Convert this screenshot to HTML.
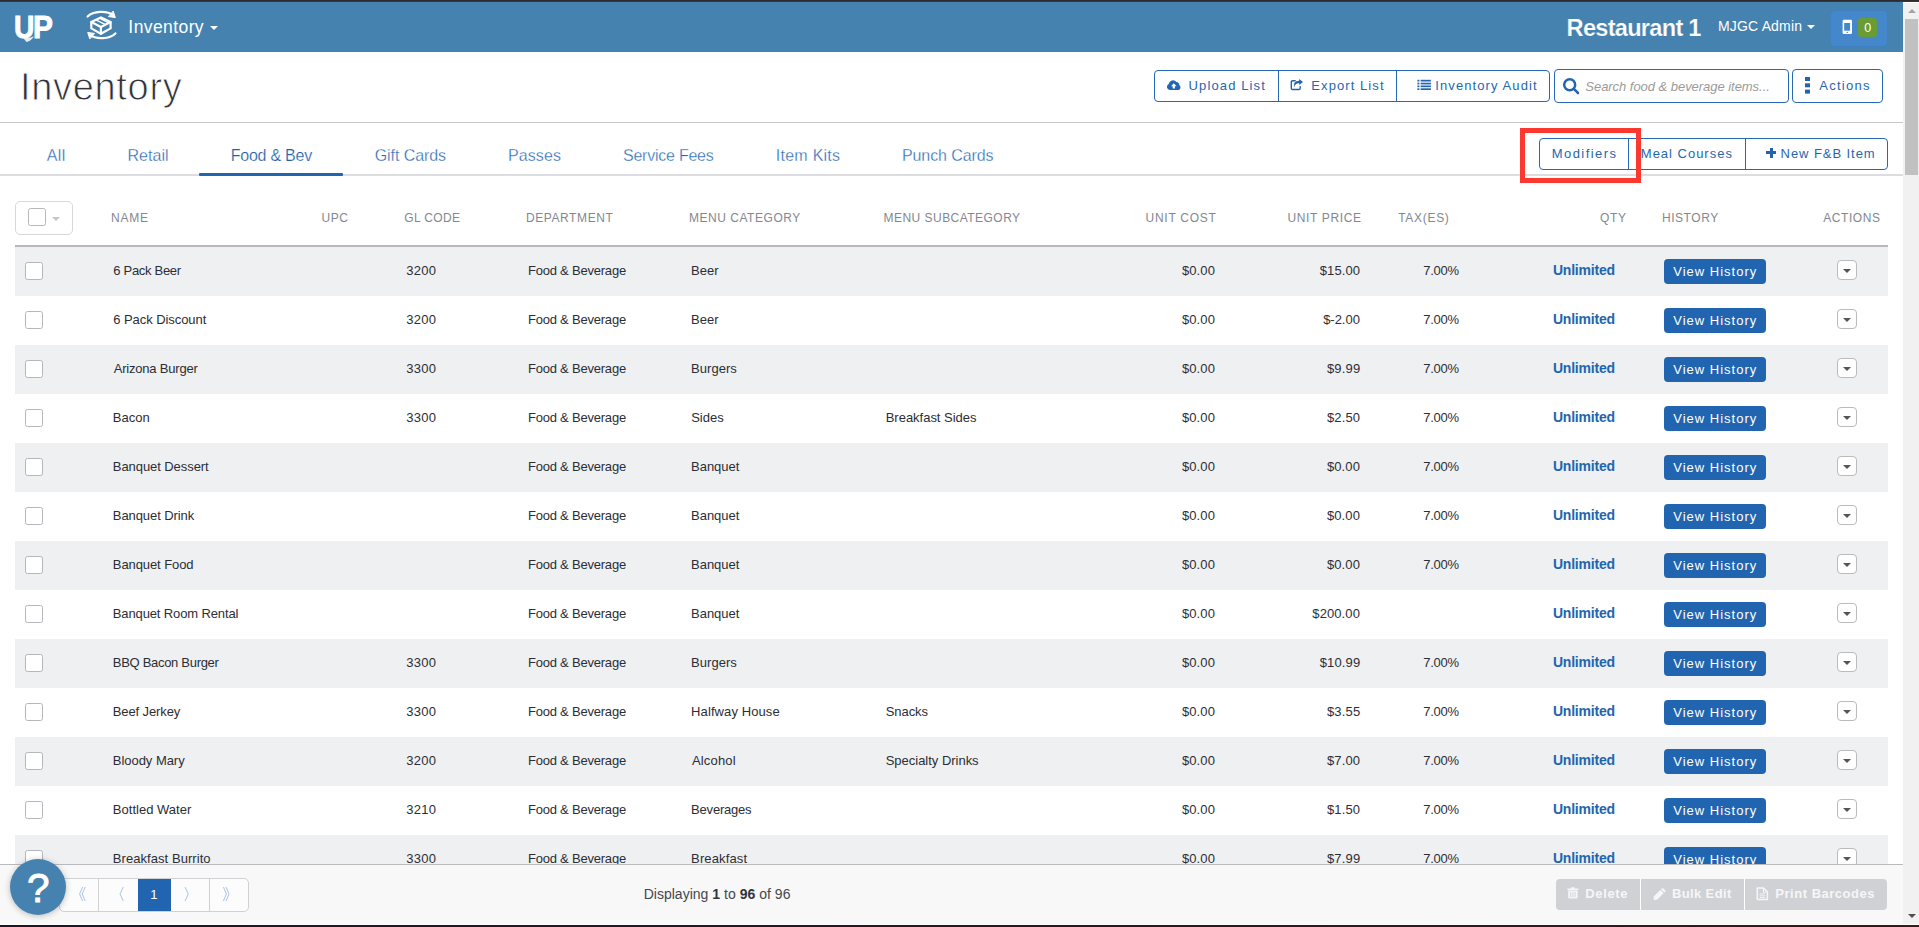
<!DOCTYPE html>
<html lang="en"><head><meta charset="utf-8"><title>Inventory</title>
<style>
html,body{margin:0;padding:0}
body{width:1919px;height:927px;overflow:hidden;position:relative;background:#fff;font-family:"Liberation Sans",sans-serif}
div,span,svg{box-sizing:border-box}
.ob{position:absolute;border:1px solid #2668b3;border-radius:4px;background:#fff}
.dv{position:absolute;width:1px;background:#2668b3}
.cb{position:absolute;width:18px;height:18px;border:1px solid #b4b6bb;border-radius:2.5px;background:#fff}
.vh{position:absolute;left:1664px;width:102px;height:25px;border-radius:4px;background:#2165b0}
.dd{position:absolute;left:1837px;width:20px;height:20px;border:1px solid #b9bbbf;border-radius:4px;background:#fff}
.dd:after{content:"";position:absolute;left:5px;top:8px;border-left:4px solid transparent;border-right:4px solid transparent;border-top:4px solid #555}
.row{position:absolute;left:15px;width:1873px;height:49px}
</style></head><body>
<div style="position:absolute;left:0px;top:0px;width:1903px;height:52px;background:#4682b0"></div>
<span style="position:absolute;left:13.70px;top:15.00px;line-height:24px;white-space:pre;color:#fff;font-family:'Liberation Sans',sans-serif;font-size:30.6px;font-weight:700;font-style:normal;letter-spacing:0px;-webkit-text-stroke:.9px #fff;transform:scaleX(.925);transform-origin:0 0;">U</span>
<span style="position:absolute;left:32.65px;top:15.00px;line-height:24px;white-space:pre;color:#fff;font-family:'Liberation Sans',sans-serif;font-size:30.6px;font-weight:700;font-style:normal;letter-spacing:0px;-webkit-text-stroke:.9px #fff;transform:scaleX(.975);transform-origin:0 0;">P</span>
<svg style="position:absolute;left:20px;top:33px" width="16" height="10" viewBox="0 0 16 10"><path d="M2 3.5 L6.5 9 Q11.5 7.8 14 3.2 Q9 5.6 4.5 4.4 Z" fill="#fff" opacity=".85"/></svg>
<svg style="position:absolute;left:80px;top:4px" width="45" height="42" viewBox="0 0 45 42" fill="none" stroke="#fff" stroke-width="2.2" stroke-linecap="round" stroke-linejoin="round">
<path d="M7.6 12.6 C13 6.9 27 6.1 33.4 11.4"/><path d="M33.3 7.4 L35.3 13.6 L28.8 12.6 Z" fill="#fff" stroke-width="1"/>
<path d="M35.4 29.4 C30 35.1 16 35.9 9.6 30.6"/><path d="M9.7 34.6 L7.7 28.4 L14.2 29.4 Z" fill="#fff" stroke-width="1"/>
<path d="M20.9 13.4 L30.6 18.1 L30.6 24.4 L20.9 29.8 L11.3 24.4 L11.3 18.1 Z"/>
<path d="M11.3 18.1 L20.9 22.9 L30.6 18.1 M20.9 22.9 L20.9 29.8"/>
<path d="M15.9 15.9 L25.5 20.6 M19.5 14.1 L28.8 18.8" stroke-width="1.5"/>
</svg>
<span style="position:absolute;left:128.37px;top:15.10px;line-height:24px;white-space:pre;color:#fff;font-family:'Liberation Sans',sans-serif;font-size:17.5px;font-weight:400;font-style:normal;letter-spacing:0.41px;">Inventory</span>
<div style="position:absolute;left:210px;top:26px;border-left:4px solid transparent;border-right:4px solid transparent;border-top:4px solid #fff"></div>
<span style="position:absolute;left:1566.59px;top:16.40px;line-height:24px;white-space:pre;color:#fff;font-family:'Liberation Sans',sans-serif;font-size:23.6px;font-weight:700;font-style:normal;letter-spacing:-0.73px;-webkit-text-stroke:.22px #4682b0;">Restaurant 1</span>
<span style="position:absolute;left:1718.05px;top:14.00px;line-height:24px;white-space:pre;color:#fff;font-family:'Liberation Sans',sans-serif;font-size:14px;font-weight:400;font-style:normal;letter-spacing:0.16px;">MJGC Admin</span>
<div style="position:absolute;left:1806.5px;top:25px;border-left:4.5px solid transparent;border-right:4.5px solid transparent;border-top:4.5px solid #fff"></div>
<div style="position:absolute;left:1830px;top:10px;width:58px;height:37px;background:#4488cb;border:1px solid #3f80c1;border-radius:5px"></div>
<svg style="position:absolute;left:1842px;top:19px" width="11" height="16" viewBox="0 0 11 16"><rect x=".6" y=".7" width="9.4" height="14.4" rx="1.3" fill="#fff"/><rect x="2.2" y="4" width="5.9" height="7.7" fill="#4488cb"/><circle cx="5.3" cy="13.4" r=".7" fill="#4488cb"/></svg>
<div style="position:absolute;left:1858px;top:18px;width:19px;height:19px;background:#6a9c35;border-radius:3.5px"></div>
<span style="position:absolute;left:1864.27px;top:15.90px;line-height:24px;white-space:pre;color:#fff;font-family:'Liberation Sans',sans-serif;font-size:12.5px;font-weight:400;font-style:normal;letter-spacing:0px;">0</span>
<div style="position:absolute;left:0px;top:0px;width:1919px;height:2px;background:linear-gradient(#2c2d31 0,#2c2d31 55%,#3d4650 100%)"></div>
<span style="position:absolute;left:20.02px;top:74.80px;line-height:24px;white-space:pre;color:#2f3238;font-family:'Liberation Sans',sans-serif;font-size:38px;font-weight:400;font-style:normal;letter-spacing:0.68px;-webkit-text-stroke:.9px #fff;">Inventory</span>
<div style="position:absolute;left:0px;top:122px;width:1903px;height:1px;background:#c6c7cb"></div>
<div class="ob" style="left:1154px;top:70px;width:396px;height:32px"></div>
<div class="dv" style="left:1278px;top:70px;height:32px"></div><div class="dv" style="left:1396px;top:70px;height:32px"></div>
<svg style="position:absolute;left:1166px;top:79px" width="16" height="12" viewBox="0 0 16 12"><path d="M3.9 11.1 A3.3 3.3 0 0 1 2.7 4.9 A4.3 4.3 0 0 1 10.4 3.1 A2.6 2.6 0 0 1 13.2 6.1 A2.7 2.7 0 0 1 12.2 11.1 Z" fill="#2165b0"/><path d="M7.8 4.3 L10.6 7.3 L8.9 7.3 L8.9 9.6 L6.7 9.6 L6.7 7.3 L5 7.3 Z" fill="#fff"/></svg>
<span style="position:absolute;left:1188.62px;top:74.00px;line-height:24px;white-space:pre;color:#2467b1;font-family:'Liberation Sans',sans-serif;font-size:13px;font-weight:400;font-style:normal;letter-spacing:1.12px;">Upload List</span>
<svg style="position:absolute;left:1290px;top:78px" width="14" height="13" viewBox="0 0 14 13" fill="none"><path d="M5.2 2.7 H2.6 Q1.3 2.7 1.3 4 V10.2 Q1.3 11.5 2.6 11.5 H8.9 Q10.2 11.5 10.2 10.2 V8.6" stroke="#2165b0" stroke-width="1.4" stroke-linecap="round"/><path d="M9.2 .9 L13 4 L9.2 7.1 V5.3 Q5.2 5 4.4 9.2 Q2.6 3.2 9.2 2.8 Z" fill="#2165b0"/></svg>
<span style="position:absolute;left:1311.32px;top:74.00px;line-height:24px;white-space:pre;color:#2467b1;font-family:'Liberation Sans',sans-serif;font-size:13px;font-weight:400;font-style:normal;letter-spacing:1.08px;">Export List</span>
<svg style="position:absolute;left:1417px;top:79px" width="15" height="12" viewBox="0 0 15 12" fill="#2165b0"><rect x=".4" y=".8" width="2" height="1.7"/><rect x="3.6" y=".8" width="10.3" height="1.7"/><rect x=".4" y="3.7" width="2" height="1.7"/><rect x="3.6" y="3.7" width="10.3" height="1.7"/><rect x=".4" y="6.5" width="2" height="1.7"/><rect x="3.6" y="6.5" width="10.3" height="1.7"/><rect x=".4" y="9.3" width="2" height="1.7"/><rect x="3.6" y="9.3" width="10.3" height="1.7"/></svg>
<span style="position:absolute;left:1435.30px;top:74.00px;line-height:24px;white-space:pre;color:#2467b1;font-family:'Liberation Sans',sans-serif;font-size:13px;font-weight:400;font-style:normal;letter-spacing:1.09px;">Inventory Audit</span>
<div class="ob" style="left:1554px;top:69px;width:235px;height:34px"></div>
<svg style="position:absolute;left:1561px;top:76px" width="20" height="20" viewBox="0 0 20 20" fill="none" stroke="#2165b0" stroke-width="2.5" stroke-linecap="round"><circle cx="8.7" cy="8.7" r="5.5"/><path d="M12.9 12.9 L17 17"/></svg>
<span style="position:absolute;left:1585.32px;top:74.60px;line-height:24px;white-space:pre;color:#9b9b9b;font-family:'Liberation Sans',sans-serif;font-size:13px;font-weight:400;font-style:italic;letter-spacing:-0.04px;">Search food &amp; beverage items...</span>
<div class="ob" style="left:1792px;top:69px;width:91px;height:34px"></div>
<div style="position:absolute;left:1805.4px;top:77.2px;width:4.6px;height:3.8px;background:#2165b0;box-shadow:0 6.3px 0 #2165b0,0 12.6px 0 #2165b0"></div>
<span style="position:absolute;left:1819.27px;top:74.00px;line-height:24px;white-space:pre;color:#2467b1;font-family:'Liberation Sans',sans-serif;font-size:13px;font-weight:400;font-style:normal;letter-spacing:1.26px;">Actions</span>
<div style="position:absolute;left:0px;top:174px;width:1903px;height:2px;background:#dcdde0"></div>
<div style="position:absolute;left:199px;top:173px;width:144px;height:3px;background:#2165b0;border-radius:1px"></div>
<span style="position:absolute;left:46.80px;top:144.20px;line-height:24px;white-space:pre;color:#2768b2;font-family:'Liberation Sans',sans-serif;font-size:16px;font-weight:400;font-style:normal;letter-spacing:0.31px;-webkit-text-stroke:.3px #fff;">All</span>
<span style="position:absolute;left:127.46px;top:144.20px;line-height:24px;white-space:pre;color:#2768b2;font-family:'Liberation Sans',sans-serif;font-size:16px;font-weight:400;font-style:normal;letter-spacing:0.06px;-webkit-text-stroke:.3px #fff;">Retail</span>
<span style="position:absolute;left:230.71px;top:144.20px;line-height:24px;white-space:pre;color:#1f5fa9;font-family:'Liberation Sans',sans-serif;font-size:16px;font-weight:400;font-style:normal;letter-spacing:-0.24px;-webkit-text-stroke:.2px #fff;">Food &amp; Bev</span>
<span style="position:absolute;left:374.75px;top:144.20px;line-height:24px;white-space:pre;color:#2768b2;font-family:'Liberation Sans',sans-serif;font-size:16px;font-weight:400;font-style:normal;letter-spacing:-0.08px;-webkit-text-stroke:.3px #fff;">Gift Cards</span>
<span style="position:absolute;left:507.96px;top:144.20px;line-height:24px;white-space:pre;color:#2768b2;font-family:'Liberation Sans',sans-serif;font-size:16px;font-weight:400;font-style:normal;letter-spacing:0.11px;-webkit-text-stroke:.3px #fff;">Passes</span>
<span style="position:absolute;left:623.01px;top:144.20px;line-height:24px;white-space:pre;color:#2768b2;font-family:'Liberation Sans',sans-serif;font-size:16px;font-weight:400;font-style:normal;letter-spacing:-0.24px;-webkit-text-stroke:.3px #fff;">Service Fees</span>
<span style="position:absolute;left:775.84px;top:144.20px;line-height:24px;white-space:pre;color:#2768b2;font-family:'Liberation Sans',sans-serif;font-size:16px;font-weight:400;font-style:normal;letter-spacing:0.25px;-webkit-text-stroke:.3px #fff;">Item Kits</span>
<span style="position:absolute;left:901.96px;top:144.20px;line-height:24px;white-space:pre;color:#2768b2;font-family:'Liberation Sans',sans-serif;font-size:16px;font-weight:400;font-style:normal;letter-spacing:-0.09px;-webkit-text-stroke:.3px #fff;">Punch Cards</span>
<div class="ob" style="left:1539px;top:138px;width:349px;height:32px"></div>
<div class="dv" style="left:1628px;top:138px;height:32px"></div><div class="dv" style="left:1745px;top:138px;height:32px"></div>
<span style="position:absolute;left:1551.82px;top:142.00px;line-height:24px;white-space:pre;color:#2467b1;font-family:'Liberation Sans',sans-serif;font-size:13px;font-weight:400;font-style:normal;letter-spacing:1.42px;">Modifiers</span>
<span style="position:absolute;left:1640.82px;top:142.00px;line-height:24px;white-space:pre;color:#2467b1;font-family:'Liberation Sans',sans-serif;font-size:13px;font-weight:400;font-style:normal;letter-spacing:0.99px;">Meal Courses</span>
<div style="position:absolute;left:1766px;top:151.4px;width:10px;height:3px;background:#2165b0"></div><div style="position:absolute;left:1769.5px;top:147.9px;width:3px;height:10px;background:#2165b0"></div>
<span style="position:absolute;left:1780.62px;top:142.00px;line-height:24px;white-space:pre;color:#2467b1;font-family:'Liberation Sans',sans-serif;font-size:13px;font-weight:400;font-style:normal;letter-spacing:0.93px;">New F&amp;B Item</span>
<div style="position:absolute;left:1520px;top:128px;width:121px;height:55px;border:5px solid #fd382e"></div>
<div style="position:absolute;left:15px;top:201px;width:58px;height:34px;border:1px solid #d6d8db;border-radius:5px;background:#fff"></div>
<div class="cb" style="left:28px;top:208px;border-color:#b6b8bc"></div>
<div style="position:absolute;left:52.3px;top:217.2px;border-left:4px solid transparent;border-right:4px solid transparent;border-top:4px solid #c6c8cb"></div>
<span style="position:absolute;left:110.88px;top:206.10px;line-height:24px;white-space:pre;color:#82888f;font-family:'Liberation Sans',sans-serif;font-size:12px;font-weight:400;font-style:normal;letter-spacing:0.84px;">NAME</span>
<span style="position:absolute;left:321.60px;top:206.10px;line-height:24px;white-space:pre;color:#82888f;font-family:'Liberation Sans',sans-serif;font-size:12px;font-weight:400;font-style:normal;letter-spacing:0.52px;">UPC</span>
<span style="position:absolute;left:404.34px;top:206.10px;line-height:24px;white-space:pre;color:#82888f;font-family:'Liberation Sans',sans-serif;font-size:12px;font-weight:400;font-style:normal;letter-spacing:0.37px;">GL CODE</span>
<span style="position:absolute;left:525.88px;top:206.10px;line-height:24px;white-space:pre;color:#82888f;font-family:'Liberation Sans',sans-serif;font-size:12px;font-weight:400;font-style:normal;letter-spacing:0.6px;">DEPARTMENT</span>
<span style="position:absolute;left:688.88px;top:206.10px;line-height:24px;white-space:pre;color:#82888f;font-family:'Liberation Sans',sans-serif;font-size:12px;font-weight:400;font-style:normal;letter-spacing:0.54px;">MENU CATEGORY</span>
<span style="position:absolute;left:883.58px;top:206.10px;line-height:24px;white-space:pre;color:#82888f;font-family:'Liberation Sans',sans-serif;font-size:12px;font-weight:400;font-style:normal;letter-spacing:0.46px;">MENU SUBCATEGORY</span>
<span style="position:absolute;left:1145.50px;top:206.10px;line-height:24px;white-space:pre;color:#82888f;font-family:'Liberation Sans',sans-serif;font-size:12px;font-weight:400;font-style:normal;letter-spacing:0.75px;">UNIT COST</span>
<span style="position:absolute;left:1287.50px;top:206.10px;line-height:24px;white-space:pre;color:#82888f;font-family:'Liberation Sans',sans-serif;font-size:12px;font-weight:400;font-style:normal;letter-spacing:0.64px;">UNIT PRICE</span>
<span style="position:absolute;left:1398.17px;top:206.10px;line-height:24px;white-space:pre;color:#82888f;font-family:'Liberation Sans',sans-serif;font-size:12px;font-weight:400;font-style:normal;letter-spacing:0.71px;">TAX(ES)</span>
<span style="position:absolute;left:1600.09px;top:206.10px;line-height:24px;white-space:pre;color:#82888f;font-family:'Liberation Sans',sans-serif;font-size:12px;font-weight:400;font-style:normal;letter-spacing:0.6px;">QTY</span>
<span style="position:absolute;left:1661.98px;top:206.10px;line-height:24px;white-space:pre;color:#82888f;font-family:'Liberation Sans',sans-serif;font-size:12px;font-weight:400;font-style:normal;letter-spacing:0.55px;">HISTORY</span>
<span style="position:absolute;left:1823.18px;top:206.10px;line-height:24px;white-space:pre;color:#82888f;font-family:'Liberation Sans',sans-serif;font-size:12px;font-weight:400;font-style:normal;letter-spacing:0.57px;">ACTIONS</span>
<div style="position:absolute;left:15px;top:245px;width:1873px;height:2px;background:#b5b8bd"></div>
<div class="row" style="top:247px;background:#eff0f2"></div>
<div class="cb" style="left:25px;top:262px"></div>
<span style="position:absolute;left:113.32px;top:259.00px;line-height:24px;white-space:pre;color:#2b2e35;font-family:'Liberation Sans',sans-serif;font-size:13px;font-weight:400;font-style:normal;letter-spacing:-0.3px;">6 Pack Beer</span>
<span style="position:absolute;left:406.26px;top:259.00px;line-height:24px;white-space:pre;color:#2b2e35;font-family:'Liberation Sans',sans-serif;font-size:13px;font-weight:400;font-style:normal;letter-spacing:0.26px;">3200</span>
<span style="position:absolute;left:527.92px;top:259.00px;line-height:24px;white-space:pre;color:#2b2e35;font-family:'Liberation Sans',sans-serif;font-size:13px;font-weight:400;font-style:normal;letter-spacing:-0.21px;">Food &amp; Beverage</span>
<span style="position:absolute;left:691.12px;top:259.00px;line-height:24px;white-space:pre;color:#2b2e35;font-family:'Liberation Sans',sans-serif;font-size:13px;font-weight:400;font-style:normal;letter-spacing:0.03px;">Beer</span>
<span style="position:absolute;left:1181.93px;top:259.00px;line-height:24px;white-space:pre;color:#2b2e35;font-family:'Liberation Sans',sans-serif;font-size:13px;font-weight:400;font-style:normal;letter-spacing:0.11px;">$0.00</span>
<span style="position:absolute;left:1319.73px;top:259.00px;line-height:24px;white-space:pre;color:#2b2e35;font-family:'Liberation Sans',sans-serif;font-size:13px;font-weight:400;font-style:normal;letter-spacing:0.1px;">$15.00</span>
<span style="position:absolute;left:1423.32px;top:259.00px;line-height:24px;white-space:pre;color:#2b2e35;font-family:'Liberation Sans',sans-serif;font-size:13px;font-weight:400;font-style:normal;letter-spacing:-0.3px;">7.00%</span>
<span style="position:absolute;left:1552.90px;top:258.00px;line-height:24px;white-space:pre;color:#2165b0;font-family:'Liberation Sans',sans-serif;font-size:14px;font-weight:700;font-style:normal;letter-spacing:-0.19px;">Unlimited</span>
<div class="vh" style="top:259px"></div>
<span style="position:absolute;left:1673.25px;top:260.00px;line-height:24px;white-space:pre;color:#fff;font-family:'Liberation Sans',sans-serif;font-size:13px;font-weight:400;font-style:normal;letter-spacing:1.0px;">View History</span>
<div class="dd" style="top:260px"></div>
<div class="cb" style="left:25px;top:311px"></div>
<span style="position:absolute;left:113.32px;top:308.00px;line-height:24px;white-space:pre;color:#2b2e35;font-family:'Liberation Sans',sans-serif;font-size:13px;font-weight:400;font-style:normal;letter-spacing:-0.07px;">6 Pack Discount</span>
<span style="position:absolute;left:406.26px;top:308.00px;line-height:24px;white-space:pre;color:#2b2e35;font-family:'Liberation Sans',sans-serif;font-size:13px;font-weight:400;font-style:normal;letter-spacing:0.26px;">3200</span>
<span style="position:absolute;left:527.92px;top:308.00px;line-height:24px;white-space:pre;color:#2b2e35;font-family:'Liberation Sans',sans-serif;font-size:13px;font-weight:400;font-style:normal;letter-spacing:-0.21px;">Food &amp; Beverage</span>
<span style="position:absolute;left:691.12px;top:308.00px;line-height:24px;white-space:pre;color:#2b2e35;font-family:'Liberation Sans',sans-serif;font-size:13px;font-weight:400;font-style:normal;letter-spacing:0.03px;">Beer</span>
<span style="position:absolute;left:1181.93px;top:308.00px;line-height:24px;white-space:pre;color:#2b2e35;font-family:'Liberation Sans',sans-serif;font-size:13px;font-weight:400;font-style:normal;letter-spacing:0.11px;">$0.00</span>
<span style="position:absolute;left:1323.13px;top:308.00px;line-height:24px;white-space:pre;color:#2b2e35;font-family:'Liberation Sans',sans-serif;font-size:13px;font-weight:400;font-style:normal;letter-spacing:-0.02px;">$-2.00</span>
<span style="position:absolute;left:1423.32px;top:308.00px;line-height:24px;white-space:pre;color:#2b2e35;font-family:'Liberation Sans',sans-serif;font-size:13px;font-weight:400;font-style:normal;letter-spacing:-0.3px;">7.00%</span>
<span style="position:absolute;left:1552.90px;top:307.00px;line-height:24px;white-space:pre;color:#2165b0;font-family:'Liberation Sans',sans-serif;font-size:14px;font-weight:700;font-style:normal;letter-spacing:-0.19px;">Unlimited</span>
<div class="vh" style="top:308px"></div>
<span style="position:absolute;left:1673.25px;top:309.00px;line-height:24px;white-space:pre;color:#fff;font-family:'Liberation Sans',sans-serif;font-size:13px;font-weight:400;font-style:normal;letter-spacing:1.0px;">View History</span>
<div class="dd" style="top:309px"></div>
<div class="row" style="top:345px;background:#eff0f2"></div>
<div class="cb" style="left:25px;top:360px"></div>
<span style="position:absolute;left:113.67px;top:357.00px;line-height:24px;white-space:pre;color:#2b2e35;font-family:'Liberation Sans',sans-serif;font-size:13px;font-weight:400;font-style:normal;letter-spacing:-0.2px;">Arizona Burger</span>
<span style="position:absolute;left:406.26px;top:357.00px;line-height:24px;white-space:pre;color:#2b2e35;font-family:'Liberation Sans',sans-serif;font-size:13px;font-weight:400;font-style:normal;letter-spacing:0.26px;">3300</span>
<span style="position:absolute;left:527.92px;top:357.00px;line-height:24px;white-space:pre;color:#2b2e35;font-family:'Liberation Sans',sans-serif;font-size:13px;font-weight:400;font-style:normal;letter-spacing:-0.21px;">Food &amp; Beverage</span>
<span style="position:absolute;left:691.12px;top:357.00px;line-height:24px;white-space:pre;color:#2b2e35;font-family:'Liberation Sans',sans-serif;font-size:13px;font-weight:400;font-style:normal;letter-spacing:0.02px;">Burgers</span>
<span style="position:absolute;left:1181.93px;top:357.00px;line-height:24px;white-space:pre;color:#2b2e35;font-family:'Liberation Sans',sans-serif;font-size:13px;font-weight:400;font-style:normal;letter-spacing:0.11px;">$0.00</span>
<span style="position:absolute;left:1326.93px;top:357.00px;line-height:24px;white-space:pre;color:#2b2e35;font-family:'Liberation Sans',sans-serif;font-size:13px;font-weight:400;font-style:normal;letter-spacing:0.17px;">$9.99</span>
<span style="position:absolute;left:1423.32px;top:357.00px;line-height:24px;white-space:pre;color:#2b2e35;font-family:'Liberation Sans',sans-serif;font-size:13px;font-weight:400;font-style:normal;letter-spacing:-0.3px;">7.00%</span>
<span style="position:absolute;left:1552.90px;top:356.00px;line-height:24px;white-space:pre;color:#2165b0;font-family:'Liberation Sans',sans-serif;font-size:14px;font-weight:700;font-style:normal;letter-spacing:-0.19px;">Unlimited</span>
<div class="vh" style="top:357px"></div>
<span style="position:absolute;left:1673.25px;top:358.00px;line-height:24px;white-space:pre;color:#fff;font-family:'Liberation Sans',sans-serif;font-size:13px;font-weight:400;font-style:normal;letter-spacing:1.0px;">View History</span>
<div class="dd" style="top:358px"></div>
<div class="cb" style="left:25px;top:409px"></div>
<span style="position:absolute;left:112.82px;top:406.00px;line-height:24px;white-space:pre;color:#2b2e35;font-family:'Liberation Sans',sans-serif;font-size:13px;font-weight:400;font-style:normal;letter-spacing:0.02px;">Bacon</span>
<span style="position:absolute;left:406.26px;top:406.00px;line-height:24px;white-space:pre;color:#2b2e35;font-family:'Liberation Sans',sans-serif;font-size:13px;font-weight:400;font-style:normal;letter-spacing:0.26px;">3300</span>
<span style="position:absolute;left:527.92px;top:406.00px;line-height:24px;white-space:pre;color:#2b2e35;font-family:'Liberation Sans',sans-serif;font-size:13px;font-weight:400;font-style:normal;letter-spacing:-0.21px;">Food &amp; Beverage</span>
<span style="position:absolute;left:691.13px;top:406.00px;line-height:24px;white-space:pre;color:#2b2e35;font-family:'Liberation Sans',sans-serif;font-size:13px;font-weight:400;font-style:normal;letter-spacing:0.02px;">Sides</span>
<span style="position:absolute;left:885.72px;top:406.00px;line-height:24px;white-space:pre;color:#2b2e35;font-family:'Liberation Sans',sans-serif;font-size:13px;font-weight:400;font-style:normal;letter-spacing:-0.02px;">Breakfast Sides</span>
<span style="position:absolute;left:1181.93px;top:406.00px;line-height:24px;white-space:pre;color:#2b2e35;font-family:'Liberation Sans',sans-serif;font-size:13px;font-weight:400;font-style:normal;letter-spacing:0.11px;">$0.00</span>
<span style="position:absolute;left:1326.93px;top:406.00px;line-height:24px;white-space:pre;color:#2b2e35;font-family:'Liberation Sans',sans-serif;font-size:13px;font-weight:400;font-style:normal;letter-spacing:0.16px;">$2.50</span>
<span style="position:absolute;left:1423.32px;top:406.00px;line-height:24px;white-space:pre;color:#2b2e35;font-family:'Liberation Sans',sans-serif;font-size:13px;font-weight:400;font-style:normal;letter-spacing:-0.3px;">7.00%</span>
<span style="position:absolute;left:1552.90px;top:405.00px;line-height:24px;white-space:pre;color:#2165b0;font-family:'Liberation Sans',sans-serif;font-size:14px;font-weight:700;font-style:normal;letter-spacing:-0.19px;">Unlimited</span>
<div class="vh" style="top:406px"></div>
<span style="position:absolute;left:1673.25px;top:407.00px;line-height:24px;white-space:pre;color:#fff;font-family:'Liberation Sans',sans-serif;font-size:13px;font-weight:400;font-style:normal;letter-spacing:1.0px;">View History</span>
<div class="dd" style="top:407px"></div>
<div class="row" style="top:443px;background:#eff0f2"></div>
<div class="cb" style="left:25px;top:458px"></div>
<span style="position:absolute;left:112.82px;top:455.00px;line-height:24px;white-space:pre;color:#2b2e35;font-family:'Liberation Sans',sans-serif;font-size:13px;font-weight:400;font-style:normal;letter-spacing:-0.07px;">Banquet Dessert</span>
<span style="position:absolute;left:527.92px;top:455.00px;line-height:24px;white-space:pre;color:#2b2e35;font-family:'Liberation Sans',sans-serif;font-size:13px;font-weight:400;font-style:normal;letter-spacing:-0.21px;">Food &amp; Beverage</span>
<span style="position:absolute;left:691.12px;top:455.00px;line-height:24px;white-space:pre;color:#2b2e35;font-family:'Liberation Sans',sans-serif;font-size:13px;font-weight:400;font-style:normal;letter-spacing:-0.04px;">Banquet</span>
<span style="position:absolute;left:1181.93px;top:455.00px;line-height:24px;white-space:pre;color:#2b2e35;font-family:'Liberation Sans',sans-serif;font-size:13px;font-weight:400;font-style:normal;letter-spacing:0.11px;">$0.00</span>
<span style="position:absolute;left:1326.93px;top:455.00px;line-height:24px;white-space:pre;color:#2b2e35;font-family:'Liberation Sans',sans-serif;font-size:13px;font-weight:400;font-style:normal;letter-spacing:0.11px;">$0.00</span>
<span style="position:absolute;left:1423.32px;top:455.00px;line-height:24px;white-space:pre;color:#2b2e35;font-family:'Liberation Sans',sans-serif;font-size:13px;font-weight:400;font-style:normal;letter-spacing:-0.3px;">7.00%</span>
<span style="position:absolute;left:1552.90px;top:454.00px;line-height:24px;white-space:pre;color:#2165b0;font-family:'Liberation Sans',sans-serif;font-size:14px;font-weight:700;font-style:normal;letter-spacing:-0.19px;">Unlimited</span>
<div class="vh" style="top:455px"></div>
<span style="position:absolute;left:1673.25px;top:456.00px;line-height:24px;white-space:pre;color:#fff;font-family:'Liberation Sans',sans-serif;font-size:13px;font-weight:400;font-style:normal;letter-spacing:1.0px;">View History</span>
<div class="dd" style="top:456px"></div>
<div class="cb" style="left:25px;top:507px"></div>
<span style="position:absolute;left:112.82px;top:504.00px;line-height:24px;white-space:pre;color:#2b2e35;font-family:'Liberation Sans',sans-serif;font-size:13px;font-weight:400;font-style:normal;letter-spacing:-0.08px;">Banquet Drink</span>
<span style="position:absolute;left:527.92px;top:504.00px;line-height:24px;white-space:pre;color:#2b2e35;font-family:'Liberation Sans',sans-serif;font-size:13px;font-weight:400;font-style:normal;letter-spacing:-0.21px;">Food &amp; Beverage</span>
<span style="position:absolute;left:691.12px;top:504.00px;line-height:24px;white-space:pre;color:#2b2e35;font-family:'Liberation Sans',sans-serif;font-size:13px;font-weight:400;font-style:normal;letter-spacing:-0.04px;">Banquet</span>
<span style="position:absolute;left:1181.93px;top:504.00px;line-height:24px;white-space:pre;color:#2b2e35;font-family:'Liberation Sans',sans-serif;font-size:13px;font-weight:400;font-style:normal;letter-spacing:0.11px;">$0.00</span>
<span style="position:absolute;left:1326.93px;top:504.00px;line-height:24px;white-space:pre;color:#2b2e35;font-family:'Liberation Sans',sans-serif;font-size:13px;font-weight:400;font-style:normal;letter-spacing:0.11px;">$0.00</span>
<span style="position:absolute;left:1423.32px;top:504.00px;line-height:24px;white-space:pre;color:#2b2e35;font-family:'Liberation Sans',sans-serif;font-size:13px;font-weight:400;font-style:normal;letter-spacing:-0.3px;">7.00%</span>
<span style="position:absolute;left:1552.90px;top:503.00px;line-height:24px;white-space:pre;color:#2165b0;font-family:'Liberation Sans',sans-serif;font-size:14px;font-weight:700;font-style:normal;letter-spacing:-0.19px;">Unlimited</span>
<div class="vh" style="top:504px"></div>
<span style="position:absolute;left:1673.25px;top:505.00px;line-height:24px;white-space:pre;color:#fff;font-family:'Liberation Sans',sans-serif;font-size:13px;font-weight:400;font-style:normal;letter-spacing:1.0px;">View History</span>
<div class="dd" style="top:505px"></div>
<div class="row" style="top:541px;background:#eff0f2"></div>
<div class="cb" style="left:25px;top:556px"></div>
<span style="position:absolute;left:112.82px;top:553.00px;line-height:24px;white-space:pre;color:#2b2e35;font-family:'Liberation Sans',sans-serif;font-size:13px;font-weight:400;font-style:normal;letter-spacing:-0.09px;">Banquet Food</span>
<span style="position:absolute;left:527.92px;top:553.00px;line-height:24px;white-space:pre;color:#2b2e35;font-family:'Liberation Sans',sans-serif;font-size:13px;font-weight:400;font-style:normal;letter-spacing:-0.21px;">Food &amp; Beverage</span>
<span style="position:absolute;left:691.12px;top:553.00px;line-height:24px;white-space:pre;color:#2b2e35;font-family:'Liberation Sans',sans-serif;font-size:13px;font-weight:400;font-style:normal;letter-spacing:-0.04px;">Banquet</span>
<span style="position:absolute;left:1181.93px;top:553.00px;line-height:24px;white-space:pre;color:#2b2e35;font-family:'Liberation Sans',sans-serif;font-size:13px;font-weight:400;font-style:normal;letter-spacing:0.11px;">$0.00</span>
<span style="position:absolute;left:1326.93px;top:553.00px;line-height:24px;white-space:pre;color:#2b2e35;font-family:'Liberation Sans',sans-serif;font-size:13px;font-weight:400;font-style:normal;letter-spacing:0.11px;">$0.00</span>
<span style="position:absolute;left:1423.32px;top:553.00px;line-height:24px;white-space:pre;color:#2b2e35;font-family:'Liberation Sans',sans-serif;font-size:13px;font-weight:400;font-style:normal;letter-spacing:-0.3px;">7.00%</span>
<span style="position:absolute;left:1552.90px;top:552.00px;line-height:24px;white-space:pre;color:#2165b0;font-family:'Liberation Sans',sans-serif;font-size:14px;font-weight:700;font-style:normal;letter-spacing:-0.19px;">Unlimited</span>
<div class="vh" style="top:553px"></div>
<span style="position:absolute;left:1673.25px;top:554.00px;line-height:24px;white-space:pre;color:#fff;font-family:'Liberation Sans',sans-serif;font-size:13px;font-weight:400;font-style:normal;letter-spacing:1.0px;">View History</span>
<div class="dd" style="top:554px"></div>
<div class="cb" style="left:25px;top:605px"></div>
<span style="position:absolute;left:112.82px;top:602.00px;line-height:24px;white-space:pre;color:#2b2e35;font-family:'Liberation Sans',sans-serif;font-size:13px;font-weight:400;font-style:normal;letter-spacing:-0.13px;">Banquet Room Rental</span>
<span style="position:absolute;left:527.92px;top:602.00px;line-height:24px;white-space:pre;color:#2b2e35;font-family:'Liberation Sans',sans-serif;font-size:13px;font-weight:400;font-style:normal;letter-spacing:-0.21px;">Food &amp; Beverage</span>
<span style="position:absolute;left:691.12px;top:602.00px;line-height:24px;white-space:pre;color:#2b2e35;font-family:'Liberation Sans',sans-serif;font-size:13px;font-weight:400;font-style:normal;letter-spacing:-0.04px;">Banquet</span>
<span style="position:absolute;left:1181.93px;top:602.00px;line-height:24px;white-space:pre;color:#2b2e35;font-family:'Liberation Sans',sans-serif;font-size:13px;font-weight:400;font-style:normal;letter-spacing:0.11px;">$0.00</span>
<span style="position:absolute;left:1312.33px;top:602.00px;line-height:24px;white-space:pre;color:#2b2e35;font-family:'Liberation Sans',sans-serif;font-size:13px;font-weight:400;font-style:normal;letter-spacing:0.09px;">$200.00</span>
<span style="position:absolute;left:1552.90px;top:601.00px;line-height:24px;white-space:pre;color:#2165b0;font-family:'Liberation Sans',sans-serif;font-size:14px;font-weight:700;font-style:normal;letter-spacing:-0.19px;">Unlimited</span>
<div class="vh" style="top:602px"></div>
<span style="position:absolute;left:1673.25px;top:603.00px;line-height:24px;white-space:pre;color:#fff;font-family:'Liberation Sans',sans-serif;font-size:13px;font-weight:400;font-style:normal;letter-spacing:1.0px;">View History</span>
<div class="dd" style="top:603px"></div>
<div class="row" style="top:639px;background:#eff0f2"></div>
<div class="cb" style="left:25px;top:654px"></div>
<span style="position:absolute;left:112.82px;top:651.00px;line-height:24px;white-space:pre;color:#2b2e35;font-family:'Liberation Sans',sans-serif;font-size:13px;font-weight:400;font-style:normal;letter-spacing:-0.3px;">BBQ Bacon Burger</span>
<span style="position:absolute;left:406.26px;top:651.00px;line-height:24px;white-space:pre;color:#2b2e35;font-family:'Liberation Sans',sans-serif;font-size:13px;font-weight:400;font-style:normal;letter-spacing:0.26px;">3300</span>
<span style="position:absolute;left:527.92px;top:651.00px;line-height:24px;white-space:pre;color:#2b2e35;font-family:'Liberation Sans',sans-serif;font-size:13px;font-weight:400;font-style:normal;letter-spacing:-0.21px;">Food &amp; Beverage</span>
<span style="position:absolute;left:691.12px;top:651.00px;line-height:24px;white-space:pre;color:#2b2e35;font-family:'Liberation Sans',sans-serif;font-size:13px;font-weight:400;font-style:normal;letter-spacing:0.02px;">Burgers</span>
<span style="position:absolute;left:1181.93px;top:651.00px;line-height:24px;white-space:pre;color:#2b2e35;font-family:'Liberation Sans',sans-serif;font-size:13px;font-weight:400;font-style:normal;letter-spacing:0.11px;">$0.00</span>
<span style="position:absolute;left:1319.73px;top:651.00px;line-height:24px;white-space:pre;color:#2b2e35;font-family:'Liberation Sans',sans-serif;font-size:13px;font-weight:400;font-style:normal;letter-spacing:0.13px;">$10.99</span>
<span style="position:absolute;left:1423.32px;top:651.00px;line-height:24px;white-space:pre;color:#2b2e35;font-family:'Liberation Sans',sans-serif;font-size:13px;font-weight:400;font-style:normal;letter-spacing:-0.3px;">7.00%</span>
<span style="position:absolute;left:1552.90px;top:650.00px;line-height:24px;white-space:pre;color:#2165b0;font-family:'Liberation Sans',sans-serif;font-size:14px;font-weight:700;font-style:normal;letter-spacing:-0.19px;">Unlimited</span>
<div class="vh" style="top:651px"></div>
<span style="position:absolute;left:1673.25px;top:652.00px;line-height:24px;white-space:pre;color:#fff;font-family:'Liberation Sans',sans-serif;font-size:13px;font-weight:400;font-style:normal;letter-spacing:1.0px;">View History</span>
<div class="dd" style="top:652px"></div>
<div class="cb" style="left:25px;top:703px"></div>
<span style="position:absolute;left:112.82px;top:700.00px;line-height:24px;white-space:pre;color:#2b2e35;font-family:'Liberation Sans',sans-serif;font-size:13px;font-weight:400;font-style:normal;letter-spacing:-0.12px;">Beef Jerkey</span>
<span style="position:absolute;left:406.26px;top:700.00px;line-height:24px;white-space:pre;color:#2b2e35;font-family:'Liberation Sans',sans-serif;font-size:13px;font-weight:400;font-style:normal;letter-spacing:0.26px;">3300</span>
<span style="position:absolute;left:527.92px;top:700.00px;line-height:24px;white-space:pre;color:#2b2e35;font-family:'Liberation Sans',sans-serif;font-size:13px;font-weight:400;font-style:normal;letter-spacing:-0.21px;">Food &amp; Beverage</span>
<span style="position:absolute;left:691.12px;top:700.00px;line-height:24px;white-space:pre;color:#2b2e35;font-family:'Liberation Sans',sans-serif;font-size:13px;font-weight:400;font-style:normal;letter-spacing:0.09px;">Halfway House</span>
<span style="position:absolute;left:885.73px;top:700.00px;line-height:24px;white-space:pre;color:#2b2e35;font-family:'Liberation Sans',sans-serif;font-size:13px;font-weight:400;font-style:normal;letter-spacing:-0.06px;">Snacks</span>
<span style="position:absolute;left:1181.93px;top:700.00px;line-height:24px;white-space:pre;color:#2b2e35;font-family:'Liberation Sans',sans-serif;font-size:13px;font-weight:400;font-style:normal;letter-spacing:0.11px;">$0.00</span>
<span style="position:absolute;left:1326.93px;top:700.00px;line-height:24px;white-space:pre;color:#2b2e35;font-family:'Liberation Sans',sans-serif;font-size:13px;font-weight:400;font-style:normal;letter-spacing:0.17px;">$3.55</span>
<span style="position:absolute;left:1423.32px;top:700.00px;line-height:24px;white-space:pre;color:#2b2e35;font-family:'Liberation Sans',sans-serif;font-size:13px;font-weight:400;font-style:normal;letter-spacing:-0.3px;">7.00%</span>
<span style="position:absolute;left:1552.90px;top:699.00px;line-height:24px;white-space:pre;color:#2165b0;font-family:'Liberation Sans',sans-serif;font-size:14px;font-weight:700;font-style:normal;letter-spacing:-0.19px;">Unlimited</span>
<div class="vh" style="top:700px"></div>
<span style="position:absolute;left:1673.25px;top:701.00px;line-height:24px;white-space:pre;color:#fff;font-family:'Liberation Sans',sans-serif;font-size:13px;font-weight:400;font-style:normal;letter-spacing:1.0px;">View History</span>
<div class="dd" style="top:701px"></div>
<div class="row" style="top:737px;background:#eff0f2"></div>
<div class="cb" style="left:25px;top:752px"></div>
<span style="position:absolute;left:112.82px;top:749.00px;line-height:24px;white-space:pre;color:#2b2e35;font-family:'Liberation Sans',sans-serif;font-size:13px;font-weight:400;font-style:normal;letter-spacing:-0.04px;">Bloody Mary</span>
<span style="position:absolute;left:406.26px;top:749.00px;line-height:24px;white-space:pre;color:#2b2e35;font-family:'Liberation Sans',sans-serif;font-size:13px;font-weight:400;font-style:normal;letter-spacing:0.26px;">3200</span>
<span style="position:absolute;left:527.92px;top:749.00px;line-height:24px;white-space:pre;color:#2b2e35;font-family:'Liberation Sans',sans-serif;font-size:13px;font-weight:400;font-style:normal;letter-spacing:-0.21px;">Food &amp; Beverage</span>
<span style="position:absolute;left:691.97px;top:749.00px;line-height:24px;white-space:pre;color:#2b2e35;font-family:'Liberation Sans',sans-serif;font-size:13px;font-weight:400;font-style:normal;letter-spacing:0.16px;">Alcohol</span>
<span style="position:absolute;left:885.73px;top:749.00px;line-height:24px;white-space:pre;color:#2b2e35;font-family:'Liberation Sans',sans-serif;font-size:13px;font-weight:400;font-style:normal;letter-spacing:-0.02px;">Specialty Drinks</span>
<span style="position:absolute;left:1181.93px;top:749.00px;line-height:24px;white-space:pre;color:#2b2e35;font-family:'Liberation Sans',sans-serif;font-size:13px;font-weight:400;font-style:normal;letter-spacing:0.11px;">$0.00</span>
<span style="position:absolute;left:1326.93px;top:749.00px;line-height:24px;white-space:pre;color:#2b2e35;font-family:'Liberation Sans',sans-serif;font-size:13px;font-weight:400;font-style:normal;letter-spacing:0.16px;">$7.00</span>
<span style="position:absolute;left:1423.32px;top:749.00px;line-height:24px;white-space:pre;color:#2b2e35;font-family:'Liberation Sans',sans-serif;font-size:13px;font-weight:400;font-style:normal;letter-spacing:-0.3px;">7.00%</span>
<span style="position:absolute;left:1552.90px;top:748.00px;line-height:24px;white-space:pre;color:#2165b0;font-family:'Liberation Sans',sans-serif;font-size:14px;font-weight:700;font-style:normal;letter-spacing:-0.19px;">Unlimited</span>
<div class="vh" style="top:749px"></div>
<span style="position:absolute;left:1673.25px;top:750.00px;line-height:24px;white-space:pre;color:#fff;font-family:'Liberation Sans',sans-serif;font-size:13px;font-weight:400;font-style:normal;letter-spacing:1.0px;">View History</span>
<div class="dd" style="top:750px"></div>
<div class="cb" style="left:25px;top:801px"></div>
<span style="position:absolute;left:112.82px;top:798.00px;line-height:24px;white-space:pre;color:#2b2e35;font-family:'Liberation Sans',sans-serif;font-size:13px;font-weight:400;font-style:normal;letter-spacing:0.02px;">Bottled Water</span>
<span style="position:absolute;left:406.26px;top:798.00px;line-height:24px;white-space:pre;color:#2b2e35;font-family:'Liberation Sans',sans-serif;font-size:13px;font-weight:400;font-style:normal;letter-spacing:0.26px;">3210</span>
<span style="position:absolute;left:527.92px;top:798.00px;line-height:24px;white-space:pre;color:#2b2e35;font-family:'Liberation Sans',sans-serif;font-size:13px;font-weight:400;font-style:normal;letter-spacing:-0.21px;">Food &amp; Beverage</span>
<span style="position:absolute;left:691.12px;top:798.00px;line-height:24px;white-space:pre;color:#2b2e35;font-family:'Liberation Sans',sans-serif;font-size:13px;font-weight:400;font-style:normal;letter-spacing:-0.21px;">Beverages</span>
<span style="position:absolute;left:1181.93px;top:798.00px;line-height:24px;white-space:pre;color:#2b2e35;font-family:'Liberation Sans',sans-serif;font-size:13px;font-weight:400;font-style:normal;letter-spacing:0.11px;">$0.00</span>
<span style="position:absolute;left:1326.93px;top:798.00px;line-height:24px;white-space:pre;color:#2b2e35;font-family:'Liberation Sans',sans-serif;font-size:13px;font-weight:400;font-style:normal;letter-spacing:0.16px;">$1.50</span>
<span style="position:absolute;left:1423.32px;top:798.00px;line-height:24px;white-space:pre;color:#2b2e35;font-family:'Liberation Sans',sans-serif;font-size:13px;font-weight:400;font-style:normal;letter-spacing:-0.3px;">7.00%</span>
<span style="position:absolute;left:1552.90px;top:797.00px;line-height:24px;white-space:pre;color:#2165b0;font-family:'Liberation Sans',sans-serif;font-size:14px;font-weight:700;font-style:normal;letter-spacing:-0.19px;">Unlimited</span>
<div class="vh" style="top:798px"></div>
<span style="position:absolute;left:1673.25px;top:799.00px;line-height:24px;white-space:pre;color:#fff;font-family:'Liberation Sans',sans-serif;font-size:13px;font-weight:400;font-style:normal;letter-spacing:1.0px;">View History</span>
<div class="dd" style="top:799px"></div>
<div class="row" style="top:835px;background:#eff0f2"></div>
<div class="cb" style="left:25px;top:850px"></div>
<span style="position:absolute;left:112.82px;top:847.00px;line-height:24px;white-space:pre;color:#2b2e35;font-family:'Liberation Sans',sans-serif;font-size:13px;font-weight:400;font-style:normal;letter-spacing:0.06px;">Breakfast Burrito</span>
<span style="position:absolute;left:406.26px;top:847.00px;line-height:24px;white-space:pre;color:#2b2e35;font-family:'Liberation Sans',sans-serif;font-size:13px;font-weight:400;font-style:normal;letter-spacing:0.26px;">3300</span>
<span style="position:absolute;left:527.92px;top:847.00px;line-height:24px;white-space:pre;color:#2b2e35;font-family:'Liberation Sans',sans-serif;font-size:13px;font-weight:400;font-style:normal;letter-spacing:-0.21px;">Food &amp; Beverage</span>
<span style="position:absolute;left:691.12px;top:847.00px;line-height:24px;white-space:pre;color:#2b2e35;font-family:'Liberation Sans',sans-serif;font-size:13px;font-weight:400;font-style:normal;letter-spacing:0.13px;">Breakfast</span>
<span style="position:absolute;left:1181.93px;top:847.00px;line-height:24px;white-space:pre;color:#2b2e35;font-family:'Liberation Sans',sans-serif;font-size:13px;font-weight:400;font-style:normal;letter-spacing:0.11px;">$0.00</span>
<span style="position:absolute;left:1326.93px;top:847.00px;line-height:24px;white-space:pre;color:#2b2e35;font-family:'Liberation Sans',sans-serif;font-size:13px;font-weight:400;font-style:normal;letter-spacing:0.17px;">$7.99</span>
<span style="position:absolute;left:1423.32px;top:847.00px;line-height:24px;white-space:pre;color:#2b2e35;font-family:'Liberation Sans',sans-serif;font-size:13px;font-weight:400;font-style:normal;letter-spacing:-0.3px;">7.00%</span>
<span style="position:absolute;left:1552.90px;top:846.00px;line-height:24px;white-space:pre;color:#2165b0;font-family:'Liberation Sans',sans-serif;font-size:14px;font-weight:700;font-style:normal;letter-spacing:-0.19px;">Unlimited</span>
<div class="vh" style="top:847px"></div>
<span style="position:absolute;left:1673.25px;top:848.00px;line-height:24px;white-space:pre;color:#fff;font-family:'Liberation Sans',sans-serif;font-size:13px;font-weight:400;font-style:normal;letter-spacing:1.0px;">View History</span>
<div class="dd" style="top:848px"></div>
<div style="position:absolute;left:0px;top:864px;width:1903px;height:60px;background:#f8f8f8;border-top:1px solid #b9babd"></div>
<div style="position:absolute;left:59px;top:878px;width:190px;height:34px;border:1px solid #d0d1d3;border-radius:5px;background:#fcfcfc"></div>
<div style="position:absolute;left:98px;top:878px;width:1px;height:34px;background:#d0d1d3"></div>
<div style="position:absolute;left:209px;top:878px;width:1px;height:34px;background:#d0d1d3"></div>
<div style="position:absolute;left:138px;top:879px;width:32.5px;height:32px;background:#2165b0"></div>
<span style="position:absolute;left:150.28px;top:882.60px;line-height:24px;white-space:pre;color:#fff;font-family:'Liberation Sans',sans-serif;font-size:13px;font-weight:400;font-style:normal;letter-spacing:0px;">1</span>
<svg style="position:absolute;left:59px;top:878px" width="190" height="34" viewBox="0 0 190 34" fill="none" stroke="#a9c5e8" stroke-width="1">
<path d="M23.6 9 L20.6 16 L23.6 23 M26.2 9 L23.2 16 L26.2 23"/>
<path d="M64.3 9 L61 16 L64.3 23"/>
<path d="M126 9 L129.3 16 L126 23"/>
<path d="M164.4 9 L167.4 16 L164.4 23 M167 9 L170 16 L167 23"/>
</svg>
<span style="position:absolute;left:643.65px;top:882.20px;line-height:24px;white-space:pre;color:#44474d;font-family:'Liberation Sans',sans-serif;font-size:14px;font-weight:400;font-style:normal;letter-spacing:0.02px;">Displaying <b style="color:#33363c">1</b> to <b style="color:#33363c">96</b> of 96</span>
<div style="position:absolute;left:1556px;top:879px;width:331px;height:31px;background:#d0d1d5;border-radius:4px"></div>
<div style="position:absolute;left:1640px;top:879px;width:1px;height:31px;background:#fff"></div>
<div style="position:absolute;left:1744px;top:879px;width:1px;height:31px;background:#fff"></div>
<svg style="position:absolute;left:1567px;top:887.4px" width="12" height="12" viewBox="0 0 12 12" fill="#f6f6f7"><path d="M.4 1.5 H3.9 V.9 Q3.9 .2 4.6 .2 H7.2 Q7.9 .2 7.9 .9 V1.5 H11.4 V3 H.4 Z"/><path d="M1.2 3.6 H10.6 V10.2 Q10.6 11.6 9.2 11.6 H2.6 Q1.2 11.6 1.2 10.2 Z"/><path d="M3.7 4.9 V10.2 M5.9 4.9 V10.2 M8.1 4.9 V10.2" stroke="#d0d1d5" stroke-width=".85"/></svg>
<span style="position:absolute;left:1585.17px;top:882.40px;line-height:24px;white-space:pre;color:#f6f6f7;font-family:'Liberation Sans',sans-serif;font-size:13px;font-weight:700;font-style:normal;letter-spacing:0.68px;">Delete</span>
<svg style="position:absolute;left:1652.5px;top:887.5px" width="13" height="13" viewBox="0 0 13 13" fill="#f6f6f7"><path d="M.5 11.6 L1 8.3 L7.3 2 L10.6 5.3 L4.3 11.6 L1 12.1 Z"/><path d="M8 1.3 L8.9 .4 Q9.6 -.2 10.3 .4 L12.2 2.3 Q12.8 3 12.2 3.7 L11.3 4.6 Z"/></svg>
<span style="position:absolute;left:1671.97px;top:882.40px;line-height:24px;white-space:pre;color:#f6f6f7;font-family:'Liberation Sans',sans-serif;font-size:13px;font-weight:700;font-style:normal;letter-spacing:0.37px;">Bulk Edit</span>
<svg style="position:absolute;left:1756px;top:887px" width="13" height="14" viewBox="0 0 13 14" fill="none"><path d="M1.3 1 H7.6 L11.4 4.8 V12.4 H1.3 Z" stroke="#f6f6f7" stroke-width="1.5" stroke-linejoin="round"/><path d="M7.4 1 V5 H11.4" stroke="#f6f6f7" stroke-width="1.1"/><path d="M3.6 6.9 H9.2 M3.6 8.8 H9.2 M3.6 10.6 H9.2" stroke="#f6f6f7" stroke-width=".9"/></svg>
<span style="position:absolute;left:1775.37px;top:882.40px;line-height:24px;white-space:pre;color:#f6f6f7;font-family:'Liberation Sans',sans-serif;font-size:13px;font-weight:700;font-style:normal;letter-spacing:0.51px;">Print Barcodes</span>
<div style="position:absolute;left:10px;top:859px;width:56px;height:56px;background:#4682b0;border-radius:50%;box-shadow:0 1px 6px rgba(0,0,0,.25)"></div>
<span style="position:absolute;left:27.03px;top:876.00px;line-height:24px;white-space:pre;color:#fff;font-family:'Liberation Sans',sans-serif;font-size:40.5px;font-weight:400;font-style:normal;letter-spacing:0px;-webkit-text-stroke:.9px #fff;">?</span>
<div style="position:absolute;left:1903px;top:0px;width:16px;height:927px;background:#fff"></div>
<div style="position:absolute;left:1903px;top:3px;width:16px;height:921px;background:#f1f1f1"></div>
<div style="position:absolute;left:1905px;top:19px;width:13px;height:156px;background:#c1c1c1"></div>
<div style="position:absolute;left:1907.5px;top:8.5px;border-left:4px solid transparent;border-right:4px solid transparent;border-bottom:4.5px solid #a3a3a3"></div>
<div style="position:absolute;left:1907.5px;top:914px;border-left:4px solid transparent;border-right:4px solid transparent;border-top:4.5px solid #505050"></div>
<div style="position:absolute;left:0px;top:0px;width:1919px;height:2px;background:linear-gradient(#2c2d31 0,#2c2d31 55%,#3d4650 100%)"></div>
<div style="position:absolute;left:0px;top:925px;width:1919px;height:2px;background:linear-gradient(90deg,#1b1627,#2a1820 60%,#351a1a)"></div>
</body></html>
